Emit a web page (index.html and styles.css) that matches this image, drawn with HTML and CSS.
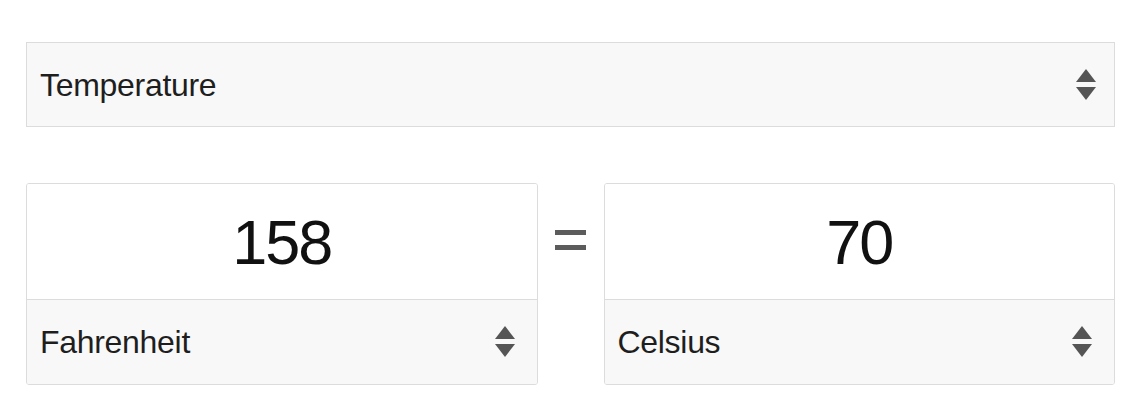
FILE: index.html
```html
<!DOCTYPE html>
<html>
<head>
<meta charset="utf-8">
<link rel="stylesheet" href="styles.css">
</head>
<body>
<div class="page">
  <div class="select-bar">
    <span class="label">Temperature</span>
    <svg class="arrows" width="22" height="34" viewBox="0 0 22 34"><polygon points="11,1 21,14 1,14" /><polygon points="1,19 21,19 11,32" /></svg>
  </div>
  <div class="row">
    <div class="unit-box">
      <div class="value">158</div>
      <div class="unit">
        <span class="label">Fahrenheit</span>
        <svg class="arrows" width="22" height="34" viewBox="0 0 22 34"><polygon points="11,1 21,14 1,14" /><polygon points="1,19 21,19 11,32" /></svg>
      </div>
    </div>
    <div class="equals"><span></span><span></span></div>
    <div class="unit-box">
      <div class="value">70</div>
      <div class="unit">
        <span class="label">Celsius</span>
        <svg class="arrows" width="22" height="34" viewBox="0 0 22 34"><polygon points="11,1 21,14 1,14" /><polygon points="1,19 21,19 11,32" /></svg>
      </div>
    </div>
  </div>
</div>
</body>
</html>
```
FILE: styles.css
```css
html, body {
  margin: 0;
  padding: 0;
  background: #ffffff;
}
body {
  font-family: "Liberation Sans", Arial, sans-serif;
  color: #1e1e1e;
}
.page {
  padding: 42px 25px 0 26px;
}
.select-bar {
  box-sizing: border-box;
  height: 85px;
  border: 1px solid #dcdcdc;
  background: #f8f8f8;
  display: flex;
  align-items: center;
  justify-content: space-between;
  padding: 0 17px 0 13px;
}
.label {
  font-size: 32px;
  line-height: 1;
  letter-spacing: -0.3px;
}
.arrows {
  fill: #555555;
  display: block;
}
.row {
  display: flex;
  align-items: flex-start;
  margin-top: 56px;
}
.unit-box {
  flex: 1 1 0;
  box-sizing: border-box;
  border: 1px solid #dcdcdc;
  border-radius: 3px;
  overflow: hidden;
}
.value {
  height: 115px;
  display: flex;
  align-items: center;
  justify-content: center;
  font-size: 63px;
  letter-spacing: -2px;
  color: #111111;
  border-bottom: 1px solid #dcdcdc;
  background: #ffffff;
}
.unit {
  height: 84px;
  background: #f8f8f8;
  display: flex;
  align-items: center;
  justify-content: space-between;
  padding: 0 21px 0 13px;
}
.equals {
  width: 66px;
  flex: 0 0 66px;
  display: flex;
  flex-direction: column;
  align-items: center;
  gap: 10px;
  padding-top: 47px;
}
.equals span {
  display: block;
  width: 31px;
  height: 5px;
  background: #5c5c5c;
}
```
